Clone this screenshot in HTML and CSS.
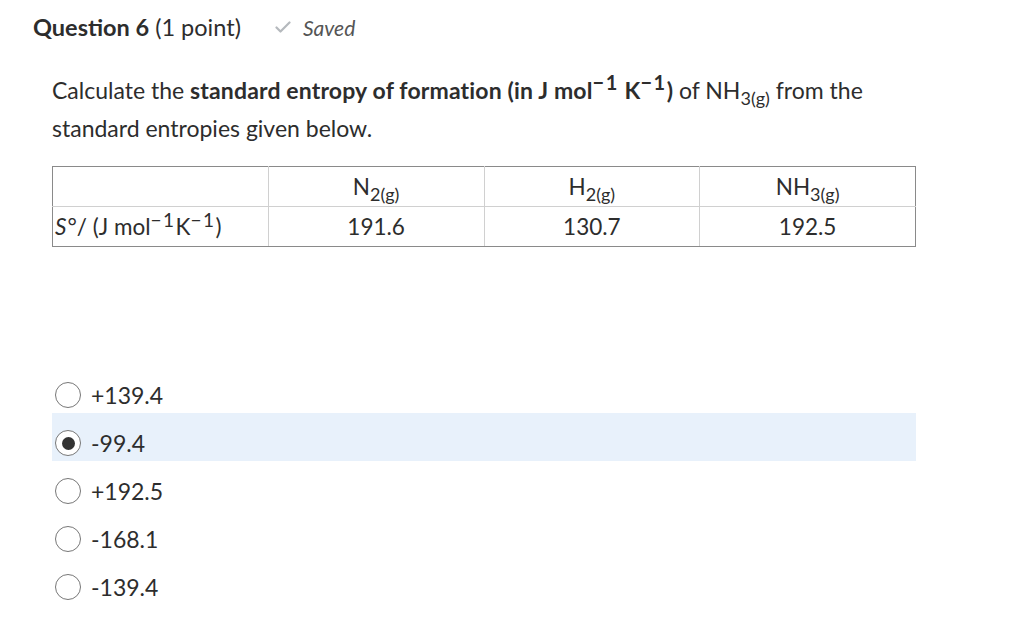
FILE: index.html
```html
<!DOCTYPE html>
<html>
<head>
<meta charset="utf-8">
<link rel="stylesheet" href="styles.css">
</head>
<body>
<div class="page">
  <div class="header">
    <h1 class="title"><b>Question 6</b> (1 point)</h1>
    <div class="saved">
      <svg class="check" width="16" height="12" viewBox="0 0 16 12"><path d="M1.5 6.5 L5.5 10.5 L14.5 1.5" fill="none" stroke="#b5b9bd" stroke-width="2.2" stroke-linecap="round" stroke-linejoin="round"/></svg>
      <span>Saved</span>
    </div>
  </div>
  <div class="body">
    <p class="prompt">Calculate the <b>standard entropy of formation (in J mol<sup>−1</sup> K<sup>−1</sup>)</b> of NH<sub>3(g)</sub> from the standard entropies given below.</p>
    <table class="data">
      <tr><td class="first"></td><td>N<sub>2(g)</sub></td><td>H<sub>2(g)</sub></td><td>NH<sub>3(g)</sub></td></tr>
      <tr><td class="first"><i>S</i>°/ (J mol<sup>−1</sup>K<sup>−1</sup>)</td><td>191.6</td><td>130.7</td><td>192.5</td></tr>
    </table>
    <div class="options">
      <label class="option"><span class="radio"></span><span>+139.4</span></label>
      <label class="option selected"><span class="radio checked"></span><span>-99.4</span></label>
      <label class="option"><span class="radio"></span><span>+192.5</span></label>
      <label class="option"><span class="radio"></span><span>-168.1</span></label>
      <label class="option"><span class="radio"></span><span>-139.4</span></label>
    </div>
  </div>
</div>
</body>
</html>
```
FILE: styles.css
```css
* { box-sizing: border-box; }
html, body { margin: 0; padding: 0; background: #fff; }
body { font-family: Lato, "Open Sans", sans-serif; color: #2d2d2d; }
.page { padding: 10px 0 0 33px; width: 1024px; }
.header { display: flex; align-items: center; height: 34px; }
.title { margin: 0; font-size: 23.5px; font-weight: 400; color: #2d2d2d; line-height: 34px; white-space: nowrap; }
.title b { font-weight: 700; }
.saved { display: flex; align-items: center; margin-left: 34px; color: #555; font-style: italic; font-size: 21px; }
.saved .check { margin-right: 12px; }
.body { padding: 27px 0 0 19px; width: 883px; }
.prompt { margin: 0; font-size: 23px; line-height: 38px; color: #2d2d2d; width: 864px; }
.prompt b { font-weight: 700; letter-spacing: 0.15px; }
.prompt sup { font-size: 20px; line-height: 0; vertical-align: 9px; letter-spacing: 1.5px; }
.prompt sub { font-size: 18px; line-height: 0; vertical-align: -6px; }
.data { margin-top: 19px; border-collapse: collapse; width: 864px; table-layout: fixed; border: 1px solid #8a8a8a; font-size: 22.5px; color: #2d2d2d; }
.data td { border: 1px solid #d0d0d0; text-align: center; height: 40px; padding: 0 4px; }
.data tr:first-child td { border-top-color: #8a8a8a; }
.data tr:last-child td { border-bottom-color: #8a8a8a; }
.data td:first-child { border-left-color: #8a8a8a; }
.data td:last-child { border-right-color: #8a8a8a; }
.data td.first { text-align: left; padding-left: 2px; white-space: nowrap; }
.data td.first i { letter-spacing: 1px; }
.data sub { font-size: 18px; line-height: 0; vertical-align: -6px; }
.data sup { font-size: 19px; line-height: 0; vertical-align: 8px; letter-spacing: 1.5px; }
.options { margin-top: 118px; display: flex; flex-direction: column; width: 864px; }
.option { display: flex; align-items: center; height: 48px; padding-top: 12px; font-size: 23px; color: #2d2d2d; }
.option.selected { background: #e8f1fb; }
.radio { width: 26px; height: 26px; border-radius: 50%; border: 1px solid #777; background: #fff; margin: 0 10px 0 3px; display: flex; align-items: center; justify-content: center; flex: none; }
.radio.checked::after { content: ""; width: 13px; height: 13px; border-radius: 50%; background: #333; }
```
